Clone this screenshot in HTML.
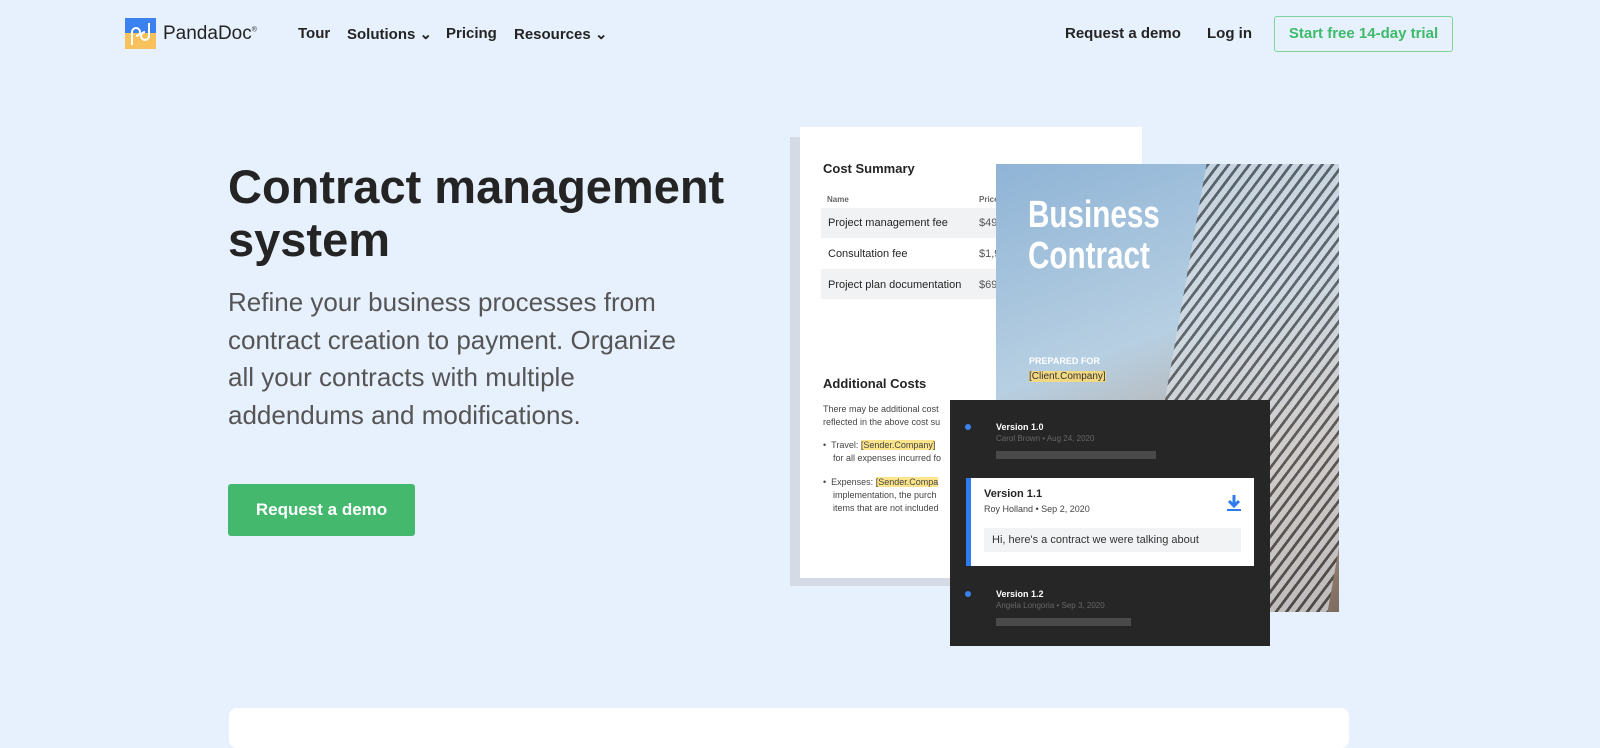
<!DOCTYPE html>
<html><head><meta charset="utf-8"><style>
*{margin:0;padding:0;box-sizing:border-box}
body{width:1600px;height:738px;overflow:hidden;background:#e7f1fd;font-family:"Liberation Sans",sans-serif;color:#242424;position:relative}
.a{position:absolute}
.nav{font-size:15px;font-weight:bold;color:#242424;top:25px}
</style></head><body>
<!-- logo -->
<div class="a" style="left:125px;top:18px;width:31px;height:31px;background:#f7c25c"></div>
<div class="a" style="left:125px;top:18px;width:31px;height:15px;background:#3b82f0"></div>
<svg class="a" style="left:125px;top:18px" width="31" height="31" viewBox="0 0 31 31"><path d="M7 27V14a4 4 0 1 1 4 4M24 5v13a4 4 0 1 1-4-4" stroke="#fff" stroke-width="2" fill="none"/></svg>
<div class="a" style="left:163px;top:23px;font-size:19px;color:#242424">PandaDoc<sup style="font-size:7px">®</sup></div>
<div class="a nav" style="left:298px">Tour</div>
<div class="a nav" style="left:347px">Solutions ⌄</div>
<div class="a nav" style="left:446px">Pricing</div>
<div class="a nav" style="left:514px">Resources ⌄</div>
<div class="a nav" style="left:1065px">Request a demo</div>
<div class="a nav" style="left:1207px">Log in</div>
<div class="a" style="left:1274px;top:16px;width:179px;height:36px;border:1px solid #7fd39b;border-radius:3px;color:#3dba6a;font-weight:bold;font-size:15px;text-align:center;line-height:34px">Start free 14-day trial</div>

<div class="a" style="left:228px;top:160px;font-size:47px;font-weight:bold;line-height:53px;color:#242424;white-space:nowrap">Contract management<br>system</div>
<div class="a" style="left:228px;top:284px;font-size:26px;line-height:37.5px;color:#555;width:480px">Refine your business processes from contract creation to payment. Organize all your contracts with multiple addendums and modifications.</div>
<div class="a" style="left:228px;top:484px;width:187px;height:52px;background:#44b86c;border-radius:3px;color:#fff;font-weight:bold;font-size:17px;text-align:center;line-height:52px">Request a demo</div>

<!-- doc -->
<div class="a" style="left:790px;top:137px;width:352px;height:449px;background:#d4dbe4"></div>
<div class="a" style="left:800px;top:127px;width:342px;height:451px;background:#fff"></div>
<div class="a" style="left:823px;top:161px;font-size:13px;font-weight:bold">Cost Summary</div>
<div class="a" style="left:827px;top:195px;font-size:8px;font-weight:bold;color:#666">Name</div>
<div class="a" style="left:979px;top:195px;font-size:8px;font-weight:bold;color:#666">Price</div>
<div class="a" style="left:821px;top:208px;width:180px;height:30px;background:#f1f2f3"></div>
<div class="a" style="left:821px;top:269px;width:180px;height:30px;background:#f1f2f3"></div>
<div class="a" style="left:828px;top:217px;font-size:11px">Project management fee</div>
<div class="a" style="left:979px;top:217px;font-size:11px;color:#555">$49</div>
<div class="a" style="left:828px;top:248px;font-size:11px">Consultation fee</div>
<div class="a" style="left:979px;top:248px;font-size:11px;color:#555">$1,9</div>
<div class="a" style="left:828px;top:279px;font-size:11px">Project plan documentation</div>
<div class="a" style="left:979px;top:279px;font-size:11px;color:#555">$69</div>
<div class="a" style="left:823px;top:376px;font-size:13px;font-weight:bold">Additional Costs</div>
<div class="a" style="left:823px;top:403px;font-size:9px;line-height:13px;color:#444">There may be additional cost<br>reflected in the above cost su</div>
<div class="a" style="left:823px;top:439px;font-size:9px;line-height:13px;color:#444">• &nbsp;Travel: <span style="background:#fbe48a">[Sender.Company]</span><br>&nbsp;&nbsp;&nbsp;&nbsp;for all expenses incurred fo</div>
<div class="a" style="left:823px;top:476px;font-size:9px;line-height:13px;color:#444">• &nbsp;Expenses: <span style="background:#fbe48a">[Sender.Compa</span><br>&nbsp;&nbsp;&nbsp;&nbsp;implementation, the purch<br>&nbsp;&nbsp;&nbsp;&nbsp;items that are not included</div>

<!-- cover -->
<div class="a" style="left:996px;top:164px;width:343px;height:448px;background:linear-gradient(160deg,#8fb4d6 0%,#b7cfe2 40%,#b8a596 70%,#7f6c60 100%);overflow:hidden">
<div class="a" style="left:170px;top:0;width:200px;height:460px;background:repeating-linear-gradient(120deg,#3a3a3a 0 3px,#d8dde2 3px 9px);opacity:.7;transform:skewX(-10deg)"></div>
<div class="a" style="left:-40px;top:360px;width:260px;height:160px;background:repeating-linear-gradient(150deg,#2b2b2b 0 4px,#c9b1a0 4px 10px);transform:rotate(-30deg);opacity:.8"></div>
</div>
<div class="a" style="left:1028px;top:195px;font-size:38px;font-weight:bold;line-height:41px;color:#fff;transform:scaleX(.78);transform-origin:left">Business<br>Contract</div>
<div class="a" style="left:1029px;top:356px;font-size:9px;font-weight:bold;color:#fff">PREPARED FOR</div>
<div class="a" style="left:1029px;top:371px;font-size:10px;background:#f3d882;color:#333">[Client.Company]</div>

<!-- versions -->
<div class="a" style="left:950px;top:400px;width:320px;height:246px;background:#262626"></div>
<div class="a" style="left:965px;top:424px;width:6px;height:6px;border-radius:50%;background:#3b82f0"></div>
<div class="a" style="left:996px;top:422px;font-size:9px;font-weight:bold;color:#fff">Version 1.0</div>
<div class="a" style="left:996px;top:434px;font-size:8px;color:#666">Carol Brown • Aug 24, 2020</div>
<div class="a" style="left:996px;top:451px;width:160px;height:8px;background:#4a4a4a"></div>
<div class="a" style="left:966px;top:478px;width:288px;height:88px;background:#fff;border-left:5px solid #2f7bf0"></div>
<div class="a" style="left:984px;top:488px;font-size:11px;font-weight:bold">Version 1.1</div>
<div class="a" style="left:984px;top:504px;font-size:9px;color:#444">Roy Holland • Sep 2, 2020</div>
<svg class="a" style="left:1226px;top:494px" width="16" height="18"><path d="M8 1v10M3 7l5 5 5-5" stroke="#2f7bf0" stroke-width="3" fill="none"/><rect x="1" y="15" width="14" height="2" fill="#2f7bf0"/></svg>
<div class="a" style="left:984px;top:528px;width:257px;height:24px;background:#f2f3f4;font-size:11px;line-height:24px;padding-left:8px;color:#333">Hi, here's a contract we were talking about</div>
<div class="a" style="left:965px;top:591px;width:6px;height:6px;border-radius:50%;background:#3b82f0"></div>
<div class="a" style="left:996px;top:589px;font-size:9px;font-weight:bold;color:#fff">Version 1.2</div>
<div class="a" style="left:996px;top:601px;font-size:8px;color:#666">Angela Longoria • Sep 3, 2020</div>
<div class="a" style="left:996px;top:618px;width:135px;height:8px;background:#4a4a4a"></div>

<div class="a" style="left:229px;top:708px;width:1120px;height:40px;background:#fff;border-radius:8px"></div>
</body></html>
